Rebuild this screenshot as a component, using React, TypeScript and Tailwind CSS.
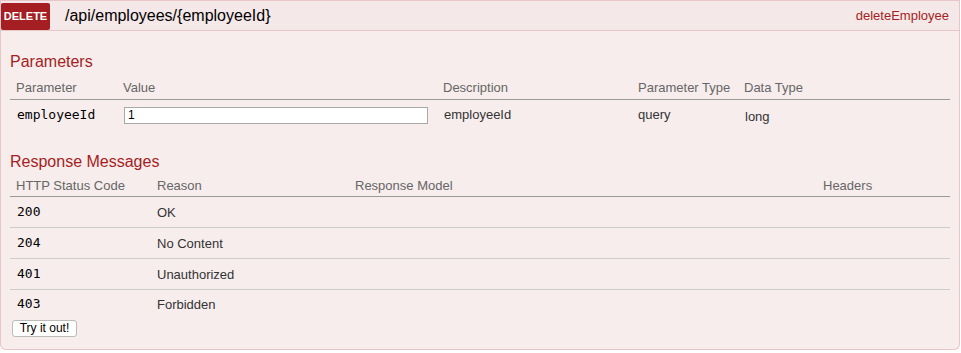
import React from "react";

const sans = { fontFamily: '"Liberation Sans", Arial, sans-serif' };

export default function App() {
  const responses = [
    ["200", "OK"],
    ["204", "No Content"],
    ["401", "Unauthorized"],
    ["403", "Forbidden"],
  ];
  return (
    <div className="w-[961px] h-[353px] bg-white font-['Liberation_Sans',Arial,sans-serif]">
      <div className="w-[960px]">
        {/* heading */}
        <div className="h-[31px] bg-[#f5e8e8] border border-[#e8c6c7] flex items-center">
          <span className="ml-[0px] mt-[1px] w-[49px] h-[27px] bg-[#a41e22] rounded-[2px] text-white text-[11px] font-bold flex items-center justify-center">
            DELETE
          </span>
          <span className="ml-[15px] text-[16px] text-black">/api/employees/{"{employeeId}"}</span>
          <span className="ml-auto mr-[10px] text-[13px] text-[#a41e22]">deleteEmployee</span>
        </div>
        {/* content */}
        <div className="h-[319px] bg-[#f7eded] border border-t-0 border-[#e8c6c7] rounded-b-[6px] pl-[9px] pr-[10px] pt-[21px]">
          <h4 className="text-[16px] leading-[20px] text-[#a41e22]">Parameters</h4>
          <div className="mt-[8px] w-[940px] text-[13px]">
            <div className="flex h-[20px] border-b border-[#999] text-[#666] leading-[16px]">
              <div className="w-[107px] pl-[6px]">Parameter</div>
              <div className="w-[326px] pl-[6px]">Value</div>
              <div className="w-[195px] pl-[0px]">Description</div>
              <div className="w-[106px]">Parameter Type</div>
              <div className="flex-1">Data Type</div>
            </div>
            <div className="flex h-[30px] items-center text-[#333]">
              <div className="w-[107px] pl-[7px] font-['DejaVu_Sans_Mono',monospace] text-[13px] text-black">employeeId</div>
              <div className="w-[326px] pl-[7px]">
                <input
                  defaultValue="1"
                  className="block w-[304px] h-[17px] border border-[#a9a9a9] bg-white text-[12px] text-black px-[3px] leading-[15px] outline-none"
                  style={sans}
                />
              </div>
              <div className="w-[195px] pl-[1px]">employeeId</div>
              <div className="w-[106px]">query</div>
              <div className="flex-1 pt-[4px] pl-[1px]">long</div>
            </div>
          </div>
          <h4 className="mt-[22px] text-[16px] leading-[20px] text-[#a41e22]">Response Messages</h4>
          <div className="mt-[6px] w-[940px] text-[13px]">
            <div className="flex h-[19px] border-b border-[#999] text-[#666] leading-[16px]">
              <div className="w-[141px] pl-[6px]">HTTP Status Code</div>
              <div className="w-[198px] pl-[6px]">Reason</div>
              <div className="w-[468px] pl-[6px]">Response Model</div>
              <div className="flex-1 pl-[6px]">Headers</div>
            </div>
            {responses.map(([code, reason], i) => (
              <div
                key={code}
                className={`flex items-center text-[#333] ${i < responses.length - 1 ? "h-[31px] border-b border-[#ccc]" : "h-[29px]"}`}
              >
                <div className="w-[141px] pl-[7px] pb-[1px] font-['DejaVu_Sans_Mono',monospace] text-[13px] text-black">{code}</div>
                <div className="w-[198px] pl-[6px] pt-[1px]">{reason}</div>
                <div className="w-[468px]" />
                <div className="flex-1" />
              </div>
            ))}
          </div>
          <button className="mt-[1px] ml-[2px] w-[65px] h-[17px] bg-white border border-[#bbb] rounded-[3px] text-[12px] leading-[15px] text-black flex items-center justify-center">
            Try it out!
          </button>
        </div>
      </div>
    </div>
  );
}
